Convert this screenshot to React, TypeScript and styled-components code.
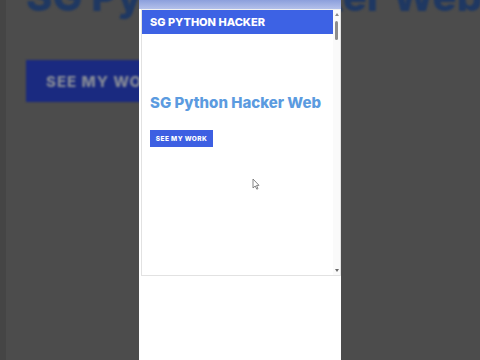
import styled, { createGlobalStyle } from 'styled-components';

const Global = createGlobalStyle`
  html, body {
    margin: 0;
    padding: 0;
    background: #4c4c4c;
    overflow: hidden;
  }
`

const App = () => {
  return (
    <>
      <Global />
      <Stage>
        <Backdrop>
          <BigTitle>SG Python Hacker Web</BigTitle>
          <BigButton>SEE MY WORK</BigButton>
        </Backdrop>

        <Phone>
          <TopStrip />
          <Frame>
            <Page>
              <Header>SG PYTHON HACKER</Header>
              <Hero>
                <Title>SG Python Hacker Web</Title>
                <Button>SEE MY WORK</Button>
              </Hero>
              <Cursor width="8" height="12" viewBox="0 0 8 12">
                <path d="M1 1 L1 10 L3.2 8 L4.8 11.2 L6 10.6 L4.5 7.5 L7 7.3 Z" fill="#fff" stroke="#777" strokeWidth="0.9" />
              </Cursor>
            </Page>
            <Scrollbar>
              <Arrow $up />
              <Thumb />
              <Spacer />
              <Arrow />
            </Scrollbar>
          </Frame>
        </Phone>
      </Stage>
    </>
  )
}

export default App;

const Stage = styled.div`
  width: 480px;
  height: 360px;
  display: grid;
  grid-template: 1fr / 1fr;
  overflow: hidden;
  background: linear-gradient(to right, #454545 0 6px, #4c4c4c 6px);
`
const Backdrop = styled.div`
  grid-area: 1 / 1;
  padding-left: 26px;
  filter: blur(0.8px);
  display: flex;
  flex-direction: column;
  align-items: flex-start;
`
const BigTitle = styled.div`
  margin-top: -23px;
  font-family: Inter, "Liberation Sans", sans-serif;
  font-weight: 800;
  font-size: 40px;
  line-height: 40px;
  color: #1f3862;
  white-space: nowrap;
`
const BigButton = styled.div`
  margin-top: 43px;
  width: 150px;
  height: 42px;
  box-sizing: border-box;
  padding-left: 20px;
  display: flex;
  align-items: center;
  background: #1a2a80;
  color: #858a96;
  font-family: Inter, "Liberation Sans", sans-serif;
  font-weight: 800;
  font-size: 15px;
  letter-spacing: 1px;
  white-space: nowrap;
`
const Phone = styled.div`
  grid-area: 1 / 1;
  justify-self: start;
  margin-left: 139px;
  position: relative;
  z-index: 1;
  width: 202px;
  height: 360px;
  background: #fff;
  display: flex;
  flex-direction: column;
`
const TopStrip = styled.div`
  height: 9px;
  background: linear-gradient(to bottom, #8c9fdc, #b3c0ea);
`
const Frame = styled.div`
  margin-left: 2px;
  width: 200px;
  height: 267px;
  box-sizing: border-box;
  border: 1px solid #e2e2e2;
  border-top-color: #f0f0f0;
  display: grid;
  grid-template-columns: 1fr 7px;
  overflow: hidden;
`
const Page = styled.div`
  position: relative;
  display: flex;
  flex-direction: column;
`
const Header = styled.div`
  height: 24px;
  background: #3d62e4;
  color: #fff;
  padding-left: 8px;
  display: flex;
  align-items: center;
  font-family: Inter, "Liberation Sans", sans-serif;
  font-weight: 800;
  font-size: 11px;
  white-space: nowrap;
`
const Hero = styled.div`
  padding: 59px 0 0 8px;
  display: flex;
  flex-direction: column;
  align-items: flex-start;
  gap: 17px;
`
const Title = styled.div`
  font-family: Inter, "Liberation Sans", sans-serif;
  font-weight: 800;
  font-size: 15px;
  line-height: 20px;
  color: #5b9be0;
  white-space: nowrap;
`
const Button = styled.div`
  width: 63px;
  height: 17px;
  background: #3d5fe2;
  color: #fff;
  display: flex;
  align-items: center;
  justify-content: center;
  font-family: Inter, "Liberation Sans", sans-serif;
  font-weight: 800;
  font-size: 6.5px;
  letter-spacing: 0.4px;
  white-space: nowrap;
`
const Cursor = styled.svg`
  position: absolute;
  left: 110px;
  top: 168px;
`
const Scrollbar = styled.div`
  display: flex;
  flex-direction: column;
  align-items: center;
  background: #fafafa;
`
const Arrow = styled.div<{ $up?: boolean }>`
  margin: 3px 0;
  width: 0;
  height: 0;
  border-left: 2px solid transparent;
  border-right: 2px solid transparent;
  ${p => p.$up ? 'border-bottom: 3px solid #8a8a8a;' : 'border-top: 3px solid #6a6a6a;'}
`
const Thumb = styled.div`
  margin-top: 2px;
  width: 3px;
  height: 19px;
  border-radius: 2px;
  background: #8d8d8d;
`
const Spacer = styled.div`
  flex: 1;
`
